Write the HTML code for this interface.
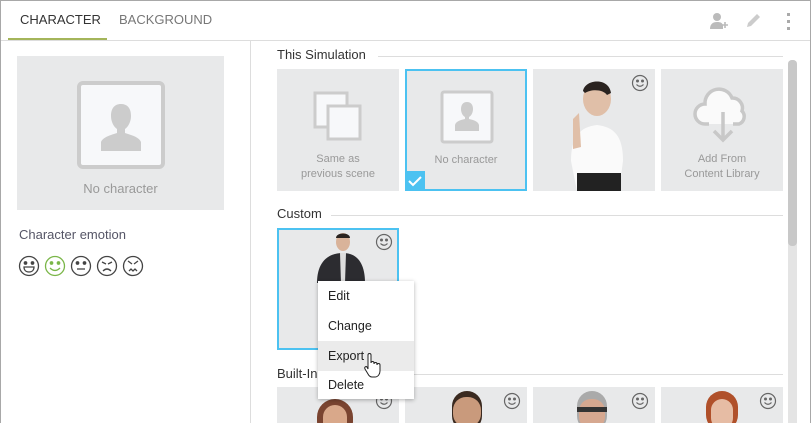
<!DOCTYPE html>
<html style="width:811px;height:423px;overflow:hidden"><head><style>
*{box-sizing:border-box;margin:0;padding:0}
body{width:811px;height:423px;overflow:hidden;background:#fff;font-family:"Liberation Sans",sans-serif;position:relative}
.frame{position:absolute;left:0;top:0;width:811px;height:423px;border:1px solid #a8a8a8;border-bottom:none}
.abs{position:absolute}
.tab{position:absolute;top:12px;font-size:13px}
.tile{position:absolute;width:122px;height:122px;background:#e8e9ea;overflow:hidden}
.lbl{position:absolute;left:0;width:100%;text-align:center;font-size:11px;color:#999;line-height:15px}
.h{position:absolute;font-size:13px;color:#333}
.line{position:absolute;height:1px;background:#ddd}
.menu{position:absolute;left:318px;top:281px;width:96px;height:118px;background:#fff;box-shadow:0 1px 4px rgba(0,0,0,.3)}
.mi{height:30px;line-height:30px;padding-left:10px;font-size:12.5px;color:#222}
</style></head><body>
<div class="frame"></div>
<div class="tab" style="left:20px;color:#333">CHARACTER</div>
<div class="tab" style="left:119px;color:#777">BACKGROUND</div>
<div class="abs" style="left:8px;top:38px;width:99px;height:3px;background:#a4b55a"></div>
<div class="abs" style="left:1px;top:40px;width:809px;height:1px;background:#ddd"></div>
<div class="abs" style="left:250px;top:41px;width:1px;height:382px;background:#ddd"></div>
<svg class="abs" style="left:708px;top:11px" width="22" height="20"><circle cx="9" cy="6" r="4" fill="#bbb"/><path d="M2 18c0-5 3-7 7-7s5 1 6 3v4z" fill="#bbb"/><path d="M14 14h6M17 11v6" stroke="#bbb" stroke-width="1.6"/></svg>
<svg class="abs" style="left:744px;top:11px" width="18" height="18"><path d="M3 16l1-4 9-9 3 3-9 9z" fill="#ccc"/></svg>
<svg class="abs" style="left:786px;top:11px" width="6" height="20"><rect x="1" y="2" width="3" height="3" fill="#aaa"/><rect x="1" y="9" width="3" height="3" fill="#aaa"/><rect x="1" y="16" width="3" height="3" fill="#aaa"/></svg>
<div class="abs" style="left:17px;top:56px;width:207px;height:154px;background:#e8e9ea"></div>
<svg class="abs" style="left:77px;top:81px" width="88" height="88"><rect x="2" y="2" width="84" height="84" rx="4" fill="#f7f8fa" stroke="#ccc" stroke-width="4"/><path d="M44 23c-7 0-10 5-10 12 0 6 3 11 6 13v4c-6 2-14 4-16 9v9h40v-9c-2-5-10-7-16-9v-4c3-2 6-7 6-13 0-7-3-12-10-12z" fill="#ccc"/></svg>
<div class="abs" style="left:17px;top:181px;width:207px;text-align:center;font-size:13px;color:#999">No character</div>
<div class="abs" style="left:19px;top:227px;font-size:13px;color:#556">Character emotion</div>
<svg class="abs" style="left:18px;top:254px" width="128" height="24" fill="none" stroke-width="1.3">
<g stroke="#444"><circle cx="11" cy="12" r="9.5"/><circle cx="7.5" cy="9" r="1.2" fill="#444"/><circle cx="14.5" cy="9" r="1.2" fill="#444"/><path d="M6 13h10c0 4-3 5-5 5s-5-1-5-5z"/></g>
<g stroke="#7ab648"><circle cx="37" cy="12" r="9.5"/><circle cx="33.5" cy="9" r="1.2" fill="#7ab648"/><circle cx="40.5" cy="9" r="1.2" fill="#7ab648"/><path d="M32 14q5 5 10 0"/></g>
<g stroke="#444"><circle cx="63" cy="12" r="9.5"/><circle cx="59.5" cy="9" r="1.2" fill="#444"/><circle cx="66.5" cy="9" r="1.2" fill="#444"/><path d="M59 15h8"/></g>
<g stroke="#444"><circle cx="89" cy="12" r="9.5"/><path d="M84 8l4 2M94 8l-4 2M85 17q4-4 8 0"/></g>
<g stroke="#444"><circle cx="115" cy="12" r="9.5"/><path d="M110 7l4 3M120 7l-4 3M111 17l2-2 2 2 2-2 2 2"/></g>
</svg>
<div class="h" style="left:277px;top:47px">This Simulation</div>
<div class="line" style="left:378px;top:56px;width:405px"></div>
<div class="tile" style="left:277px;top:69px">
<svg class="abs" style="left:36px;top:22px" width="50" height="50"><rect x="2" y="2" width="32" height="34" fill="#f7f8fa" stroke="#ccc" stroke-width="3"/><rect x="15" y="15" width="32" height="33" fill="#f7f8fa" stroke="#ccc" stroke-width="3"/></svg>
<div class="lbl" style="top:83px">Same as<br>previous scene</div></div>
<div class="tile" style="left:405px;top:69px;border:2px solid #4cc2f1">
<svg class="abs" style="left:33px;top:19px" width="54" height="54"><rect x="2" y="2" width="50" height="50" rx="2" fill="#f7f8fa" stroke="#ccc" stroke-width="3"/><path d="M27 12c-4 0-6 3-6 7 0 4 2 7 4 8v2c-4 1-9 2-10 6v6h24v-6c-1-4-6-5-10-6v-2c2-1 4-4 4-8 0-4-2-7-6-7z" fill="#ccc"/></svg>
<div class="lbl" style="top:82px">No character</div>
<div class="abs" style="left:-2px;top:100px;width:20px;height:20px;background:#4cc2f1"><svg width="20" height="20"><path d="M4 10l4 4 8-8" stroke="#fff" stroke-width="2" fill="none"/></svg></div></div>
<div class="tile" style="left:533px;top:69px">
<svg class="abs" style="left:0;top:0" width="122" height="122"><ellipse cx="64" cy="30" rx="14" ry="17" fill="#e0bfa8"/><path d="M50 22c2-12 26-14 28 2l-4 2c-4-6-16-6-22-2z" fill="#2a2320"/><path d="M38 92c0-20 6-34 26-36 18 2 26 12 26 36l-4 30H44z" fill="#fafafa"/><rect x="44" y="104" width="44" height="18" fill="#222"/><path d="M46 44l-6 6v30l8-2z" fill="#e0bfa8"/></svg>
<svg class="abs" style="left:98px;top:5px" width="18" height="18" fill="none" stroke="#666" stroke-width="1.2"><circle cx="9" cy="9" r="7.5"/><circle cx="6.5" cy="7" r=".9" fill="#666"/><circle cx="11.5" cy="7" r=".9" fill="#666"/><path d="M5.5 10.5q3.5 3.5 7 0"/></svg></div>
<div class="tile" style="left:661px;top:69px">
<svg class="abs" style="left:30px;top:15px" width="64" height="60" fill="none" stroke="#c8c8c8" stroke-width="3.5"><path d="M18 40h-4a10 10 0 0 1 0-20 14 14 0 0 1 27-6 10 10 0 0 1 10 13 8 8 0 0 1 -3 13h-6" fill="#fafafa"/><path d="M32 28v28M23 47l9 9 9-9"/></svg>
<div class="lbl" style="top:83px">Add From<br>Content Library</div></div>
<div class="h" style="left:277px;top:206px">Custom</div>
<div class="line" style="left:331px;top:215px;width:452px"></div>
<div class="tile" style="left:277px;top:228px;border:2px solid #4cc2f1">
<svg class="abs" style="left:-2px;top:-2px" width="122" height="122"><ellipse cx="66" cy="14" rx="7" ry="9" fill="#d9b39a"/><path d="M59 10c0-6 14-6 14 0z" fill="#2a2320"/><path d="M40 55c0-20 10-30 26-30 14 0 22 10 22 30z" fill="#2c2c30"/><path d="M63 25h6l-1 30h-4z" fill="#ddd"/></svg>
<svg class="abs" style="left:96px;top:3px" width="18" height="18" fill="none" stroke="#666" stroke-width="1.2"><circle cx="9" cy="9" r="7.5"/><circle cx="6.5" cy="7" r=".9" fill="#666"/><circle cx="11.5" cy="7" r=".9" fill="#666"/><path d="M5.5 10.5q3.5 3.5 7 0"/></svg></div>
<div class="h" style="left:277px;top:366px">Built-In</div>
<div class="line" style="left:340px;top:374px;width:443px"></div>
<div class="tile" style="left:277px;top:387px;height:36px"><div class="abs" style="left:40px;top:12px;width:36px;height:40px;border-radius:18px;background:#7a4430"></div><div class="abs" style="left:46px;top:18px;width:24px;height:30px;border-radius:12px;background:#d9a88a"></div>
<svg class="abs" style="left:98px;top:5px" width="18" height="18" fill="none" stroke="#666" stroke-width="1.2"><circle cx="9" cy="9" r="7.5"/><circle cx="6.5" cy="7" r=".9" fill="#666"/><circle cx="11.5" cy="7" r=".9" fill="#666"/><path d="M5.5 10.5q3.5 3.5 7 0"/></svg></div>
<div class="tile" style="left:405px;top:387px;height:36px"><div class="abs" style="left:47px;top:4px;width:30px;height:40px;border-radius:15px;background:#3a2a20"></div><div class="abs" style="left:48px;top:10px;width:28px;height:30px;border-radius:13px;background:#c99a7c"></div>
<svg class="abs" style="left:98px;top:5px" width="18" height="18" fill="none" stroke="#666" stroke-width="1.2"><circle cx="9" cy="9" r="7.5"/><circle cx="6.5" cy="7" r=".9" fill="#666"/><circle cx="11.5" cy="7" r=".9" fill="#666"/><path d="M5.5 10.5q3.5 3.5 7 0"/></svg></div>
<div class="tile" style="left:533px;top:387px;height:36px"><div class="abs" style="left:44px;top:4px;width:30px;height:40px;border-radius:15px;background:#aaa"></div><div class="abs" style="left:46px;top:12px;width:26px;height:30px;border-radius:12px;background:#d6a890"></div><div class="abs" style="left:44px;top:20px;width:30px;height:5px;background:#333"></div>
<svg class="abs" style="left:98px;top:5px" width="18" height="18" fill="none" stroke="#666" stroke-width="1.2"><circle cx="9" cy="9" r="7.5"/><circle cx="6.5" cy="7" r=".9" fill="#666"/><circle cx="11.5" cy="7" r=".9" fill="#666"/><path d="M5.5 10.5q3.5 3.5 7 0"/></svg></div>
<div class="tile" style="left:661px;top:387px;height:36px"><div class="abs" style="left:45px;top:4px;width:32px;height:40px;border-radius:16px;background:#b0502a"></div><div class="abs" style="left:50px;top:12px;width:22px;height:30px;border-radius:11px;background:#e6bca4"></div>
<svg class="abs" style="left:98px;top:5px" width="18" height="18" fill="none" stroke="#666" stroke-width="1.2"><circle cx="9" cy="9" r="7.5"/><circle cx="6.5" cy="7" r=".9" fill="#666"/><circle cx="11.5" cy="7" r=".9" fill="#666"/><path d="M5.5 10.5q3.5 3.5 7 0"/></svg></div>
<div class="abs" style="left:788px;top:60px;width:9px;height:363px;background:#e4e4e4;border-radius:4px 4px 0 0"></div>
<div class="abs" style="left:788px;top:60px;width:9px;height:186px;background:#c8c8c8;border-radius:4px"></div>
<div class="menu"><div class="mi">Edit</div><div class="mi">Change</div><div class="mi" style="background:#ebebeb">Export</div><div class="mi" style="height:28px;line-height:28px">Delete</div></div>
<svg class="abs" style="left:363px;top:352px" width="20" height="26"><path d="M5 3c0-2 3-2 3 0v8c0-2 3-2 3 0v1c0-2 3-2 3 0v1c0-2 3-2 3 0v6c0 3-2 6-5 6h-3c-2 0-3-1-4-3l-3-5c-1-2 1-3 2-2l1 2z" fill="#fff" stroke="#222" stroke-width="1"/></svg>
</body></html>
